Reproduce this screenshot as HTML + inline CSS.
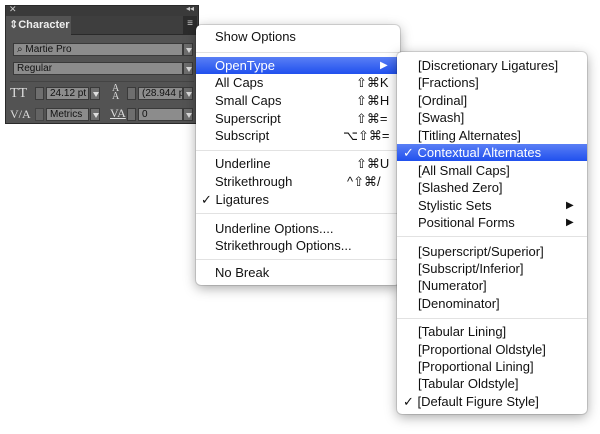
<!DOCTYPE html>
<html><head><style>
body{margin:0;width:600px;height:434px;background:#fff;position:relative;overflow:hidden;font-family:"Liberation Sans","DejaVu Sans",sans-serif;}
.a{position:absolute;white-space:nowrap}
.menu{position:absolute;background:#fff;border-radius:5px;box-shadow:0 3px 12px rgba(0,0,0,.35),0 0 0 1px rgba(0,0,0,.12);}
.it{position:absolute;font-size:13px;color:#111;line-height:17px;white-space:nowrap}
.sep{position:absolute;height:1px;background:#e2e2e2}
.hl{position:absolute;background:linear-gradient(#5a7ff5,#2050ee);}
.panel{position:absolute;left:5px;top:5px;width:192px;height:117px;background:#535353;border:1px solid #2a2a2a;}
.fld{position:absolute;background:#8c8c8c;border:1px solid #3a3a3a;font-size:10px;color:#111;line-height:12px;padding-left:3px;box-sizing:border-box;overflow:hidden;white-space:nowrap}
.dd{position:absolute;background:#6e6e6e;border:1px solid #3a3a3a;box-sizing:border-box}
.dd:after{content:"";position:absolute;left:2px;top:4px;border-left:3.5px solid transparent;border-right:3.5px solid transparent;border-top:5px solid #ddd}
.sp{position:absolute;width:9px;height:13px;background:#6e6e6e;border:1px solid #3a3a3a;box-sizing:border-box}
.ic{position:absolute;color:#ddd;font-size:11px;font-family:"Liberation Serif",serif;white-space:nowrap}
</style></head><body>

<div class="panel">
 <div class="a" style="left:0;top:0;width:192px;height:10px;background:#3a3a3a"></div>
 <div class="a" style="left:3px;top:-2px;color:#ccc;font-size:9px">✕</div>
 <div class="a" style="left:180px;top:-2px;color:#ccc;font-size:8px">◂◂</div>
 <div class="a" style="left:0;top:10px;width:192px;height:18px;background:#3e3e3e;border-bottom:1px solid #2a2a2a"></div>
 <div class="a" style="left:0;top:10px;width:65px;height:19px;background:#535353"></div>
 <div class="a" style="left:3px;top:12px;color:#eee;font-size:11px;font-weight:bold">⇕Character</div>
 <div class="a" style="left:177px;top:10px;width:14px;height:18px;background:#2c2c2c;color:#ccc;font-size:10px;line-height:16px;text-align:center">≡</div>
 <div class="fld" style="left:7px;top:37px;width:170px;height:13px">⌕ Martie Pro</div>
 <div class="dd" style="left:177px;top:37px;width:10px;height:13px"></div>
 <div class="fld" style="left:7px;top:56px;width:170px;height:13px">Regular</div>
 <div class="dd" style="left:177px;top:56px;width:10px;height:13px"></div>
 <div class="a" style="left:4px;top:75px;width:184px;height:1px;background:#444"></div>
 <div class="ic" style="left:4px;top:80px;font-size:14px">TT</div>
 <div class="sp" style="left:29px;top:81px"></div>
 <div class="fld" style="left:40px;top:81px;width:43px;height:13px">24.12 pt</div>
 <div class="dd" style="left:84px;top:81px;width:10px;height:13px"></div>
 <div class="ic" style="left:106px;top:79px;font-size:10px;line-height:8px">A<br>A</div>
 <div class="sp" style="left:121px;top:81px"></div>
 <div class="fld" style="left:132px;top:81px;width:45px;height:13px">(28.944 p</div>
 <div class="dd" style="left:177px;top:81px;width:10px;height:13px"></div>
 <div class="ic" style="left:4px;top:101px;font-size:12px">V/A</div>
 <div class="sp" style="left:29px;top:102px;opacity:.6"></div>
 <div class="fld" style="left:40px;top:102px;width:43px;height:13px">Metrics</div>
 <div class="dd" style="left:84px;top:102px;width:10px;height:13px"></div>
 <div class="ic" style="left:104px;top:100px;font-size:12px;text-decoration:underline">VA</div>
 <div class="sp" style="left:121px;top:102px"></div>
 <div class="fld" style="left:132px;top:102px;width:45px;height:13px">0</div>
 <div class="dd" style="left:177px;top:102px;width:10px;height:13px"></div>
</div>

<div class="menu" style="left:196px;top:25px;width:204px;height:260px">
 <div class="it" style="left:19px;top:3px">Show Options</div>
 <div class="sep" style="left:0;top:27px;width:204px"></div>
 <div class="hl" style="left:0;top:32px;width:204px;height:17px"></div>
 <div class="it" style="left:19px;top:32px;color:#fff">OpenType</div>
 <div class="it" style="left:184px;top:32px;color:#fff;font-size:10px">▶</div>
 <div class="it" style="left:19px;top:49px">All Caps</div><div class="it" style="left:160px;top:49px">⇧⌘K</div>
 <div class="it" style="left:19px;top:67px">Small Caps</div><div class="it" style="left:160px;top:67px">⇧⌘H</div>
 <div class="it" style="left:19px;top:85px">Superscript</div><div class="it" style="left:160px;top:85px">⇧⌘=</div>
 <div class="it" style="left:19px;top:102px">Subscript</div><div class="it" style="left:147px;top:102px">⌥⇧⌘=</div>
 <div class="sep" style="left:0;top:125px;width:204px"></div>
 <div class="it" style="left:19px;top:130px">Underline</div><div class="it" style="left:160px;top:130px">⇧⌘U</div>
 <div class="it" style="left:19px;top:148px">Strikethrough</div><div class="it" style="left:151px;top:148px">^⇧⌘/</div>
 <div class="it" style="left:5px;top:166px">✓ Ligatures</div>
 <div class="sep" style="left:0;top:188px;width:204px"></div>
 <div class="it" style="left:19px;top:195px">Underline Options....</div>
 <div class="it" style="left:19px;top:212px">Strikethrough Options...</div>
 <div class="sep" style="left:0;top:234px;width:204px"></div>
 <div class="it" style="left:19px;top:239px">No Break</div>
</div>

<div class="menu" style="left:397px;top:52px;width:190px;height:362px">
 <div class="it" style="left:21px;top:5px">[Discretionary Ligatures]</div>
 <div class="it" style="left:21px;top:22px">[Fractions]</div>
 <div class="it" style="left:21px;top:40px">[Ordinal]</div>
 <div class="it" style="left:21px;top:57px">[Swash]</div>
 <div class="it" style="left:21px;top:75px">[Titling Alternates]</div>
 <div class="hl" style="left:0;top:92px;width:190px;height:17px"></div>
 <div class="it" style="left:6px;top:92px;color:#fff">✓ Contextual Alternates</div>
 <div class="it" style="left:21px;top:110px">[All Small Caps]</div>
 <div class="it" style="left:21px;top:127px">[Slashed Zero]</div>
 <div class="it" style="left:21px;top:145px">Stylistic Sets</div><div class="it" style="left:169px;top:145px;font-size:10px">▶</div>
 <div class="it" style="left:21px;top:162px">Positional Forms</div><div class="it" style="left:169px;top:162px;font-size:10px">▶</div>
 <div class="sep" style="left:0;top:184px;width:190px"></div>
 <div class="it" style="left:21px;top:191px">[Superscript/Superior]</div>
 <div class="it" style="left:21px;top:208px">[Subscript/Inferior]</div>
 <div class="it" style="left:21px;top:225px">[Numerator]</div>
 <div class="it" style="left:21px;top:243px">[Denominator]</div>
 <div class="sep" style="left:0;top:266px;width:190px"></div>
 <div class="it" style="left:21px;top:271px">[Tabular Lining]</div>
 <div class="it" style="left:21px;top:289px">[Proportional Oldstyle]</div>
 <div class="it" style="left:21px;top:306px">[Proportional Lining]</div>
 <div class="it" style="left:21px;top:323px">[Tabular Oldstyle]</div>
 <div class="it" style="left:6px;top:341px">✓ [Default Figure Style]</div>
</div>
</body></html>
